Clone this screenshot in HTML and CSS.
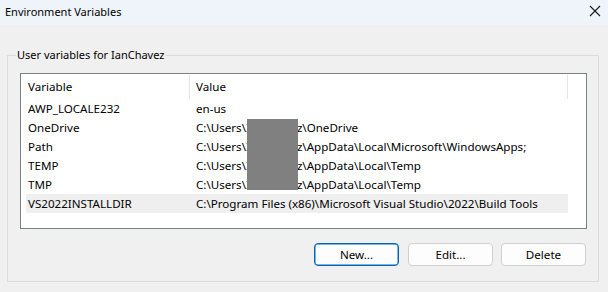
FILE: index.html
```html
<!DOCTYPE html>
<html>
<head>
<meta charset="utf-8">
<link rel="stylesheet" href="styles.css">
</head>
<body>
<div class="window">
  <div class="titlebar">
    <span class="title">Environment Variables</span>
    <svg class="close" width="12" height="12" viewBox="0 0 12 12"><path d="M1 1 L11 11 M11 1 L1 11" stroke="#1a1a1a" stroke-width="1.1" fill="none"/></svg>
  </div>
  <div class="main">
    <div class="group">
      <span class="legend">User variables for IanChavez</span>
      <div class="listbox">
        <div class="row head">
          <div class="c1">Variable</div>
          <div class="c2">Value</div>
        </div>
        <div class="row"><div class="c1">AWP_LOCALE232</div><div class="c2">en-us</div></div>
        <div class="row"><div class="c1">OneDrive</div><div class="c2">C:\Users\IanChavez\OneDrive</div></div>
        <div class="row"><div class="c1">Path</div><div class="c2">C:\Users\IanChavez\AppData\Local\Microsoft\WindowsApps;</div></div>
        <div class="row"><div class="c1">TEMP</div><div class="c2">C:\Users\IanChavez\AppData\Local\Temp</div></div>
        <div class="row"><div class="c1">TMP</div><div class="c2">C:\Users\IanChavez\AppData\Local\Temp</div></div>
        <div class="row sel"><div class="c1">VS2022INSTALLDIR</div><div class="c2">C:\Program Files (x86)\Microsoft Visual Studio\2022\Build Tools</div></div>
        <div class="redact"></div>
      </div>
      <div class="buttons">
        <button class="btn focus">New...</button>
        <button class="btn">Edit...</button>
        <button class="btn">Delete</button>
      </div>
    </div>
  </div>
</div>
</body>
</html>
```
FILE: styles.css
```css
html, body {
  margin: 0;
  padding: 0;
  background: #f0f0f0;
}
body {
  width: 608px;
  height: 292px;
  overflow: hidden;
  font-family: "Noto Sans", "Open Sans", sans-serif;
  font-size: 11.6px;
  color: #000;
}
.titlebar {
  height: 25px;
  background: #eef4f9;
  display: flex;
  align-items: center;
  justify-content: space-between;
  padding: 0 7px 3px 5px;
  box-sizing: border-box;
}
.title {
  font-size: 11px;
  color: #000;
}
.close {
  display: block;
}
.main {
  padding: 30px 9px 0 7px;
}
.group {
  position: relative;
  border: 1px solid #dcdcdc;
  height: 208px;
  padding: 17px 11px 0 12px;
  box-sizing: content-box;
}
.legend {
  position: absolute;
  top: -10px;
  left: 8px;
  background: #f0f0f0;
  padding: 0 1px;
  line-height: 18px;
  font-size: 11px;
}
.listbox {
  position: relative;
  background: #fff;
  border: 1px solid #7a7f89;
  height: 154px;
  padding: 0 18px 0 5px;
}
.row {
  display: flex;
  height: 19px;
  align-items: center;
  white-space: nowrap;
}
.row.head {
  height: 25px;
}
.c1 {
  width: 164px;
  padding-left: 2px;
  box-sizing: border-box;
}
.c2 {
  width: 378px;
  padding-left: 6px;
  box-sizing: border-box;
}
.head .c1, .head .c2 {
  height: 24px;
  line-height: 24px;
  margin-top: 1px;
  border-right: 1px solid #e5e5e5;
}
.sel {
  background: #efefef;
}
.redact {
  position: absolute;
  left: 226px;
  top: 45px;
  width: 51px;
  height: 71px;
  background: #808080;
}
.buttons {
  display: flex;
  justify-content: flex-end;
  padding-right: 1px;
  margin-top: 14px;
}
.btn {
  width: 85px;
  height: 23px;
  margin-left: 9px;
  font-family: inherit;
  font-size: 11.6px;
  color: #000;
  background: #fdfdfd;
  border: 1px solid #d0d0d0;
  border-radius: 4px;
  padding: 0;
  box-sizing: border-box;
}
.btn:last-child {
  margin-left: 8px;
}
.btn.focus {
  border: 1px solid #0067c0;
  box-shadow: inset 0 0 0 0.5px #0067c0;
}
```
